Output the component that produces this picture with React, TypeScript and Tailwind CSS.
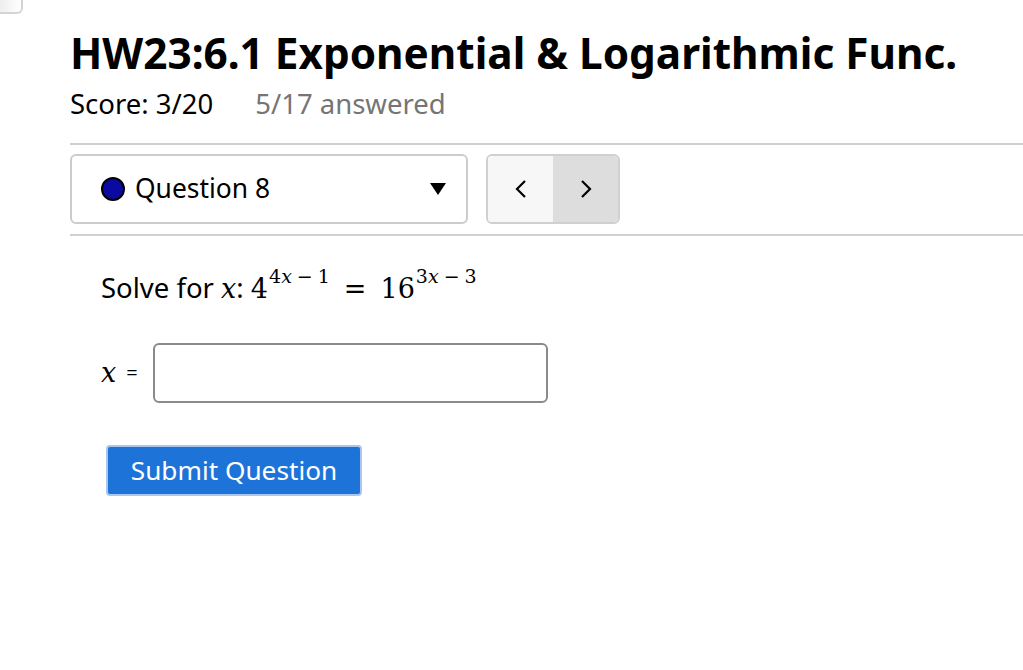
import React from 'react';

function Mx({ children }: { children: React.ReactNode }) {
  return <span className="italic">{children}</span>;
}

export default function App() {
  return (
    <div className="relative min-h-[670px] bg-white text-black font-['Noto_Sans',sans-serif]">
      {/* sidebar toggle stub */}
      <div className="absolute left-0 top-0 h-[14px] w-[23px] rounded-br-[6px] border-b-2 border-r-2 border-[#d4d4d4] bg-gradient-to-r from-[#eeeeee] to-white" />

      <div className="pl-[70px] pt-[26px]">
        <h1 className="text-[42.3px] font-bold leading-[54px]">
          HW23:6.1 Exponential &amp; Logarithmic Func.
        </h1>
        <div className="mt-[7px] flex items-baseline gap-[42px] text-[27.5px] leading-[34px]">
          <span>Score: 3/20</span>
          <span className="text-[#757575]">5/17 answered</span>
        </div>

        <div className="mt-[22px] border-t-2 border-[#d0d0d0]" />

        <div className="flex items-center gap-[18px] pb-[10px] pt-[9px]">
          <div className="flex h-[70px] w-[398px] items-center rounded-[6px] border-2 border-[#cccccc] pl-[29px] pr-[20px]">
            <span className="h-[24px] w-[24px] rounded-full border-2 border-black bg-[#0a0aa0]" />
            <span className="ml-[10px] text-[26.4px]">Question 8</span>
            <svg className="ml-auto" width="16" height="12" viewBox="0 0 16 12">
              <path d="M0 0 H16 L8 12 Z" fill="#000" />
            </svg>
          </div>
          <div className="flex h-[70px] w-[134px] overflow-hidden rounded-[6px] border-2 border-[#d0d0d0]">
            <button className="flex flex-1 items-center justify-center bg-[#f7f7f7]">
              <svg width="12" height="20" viewBox="0 0 12 20">
                <path d="M10 2 L2 10 L10 18" fill="none" stroke="#000" strokeWidth="2.2" />
              </svg>
            </button>
            <button className="flex flex-1 items-center justify-center bg-[#dddddd]">
              <svg width="12" height="20" viewBox="0 0 12 20">
                <path d="M2 2 L10 10 L2 18" fill="none" stroke="#000" strokeWidth="2.2" />
              </svg>
            </button>
          </div>
        </div>

        <div className="border-t-2 border-[#d0d0d0]" />

        <div className="pl-[31px]">
          <div className="mt-[32px] flex items-baseline text-[27.5px] leading-[40px]">
            <span>Solve for&nbsp;</span>
            <span className="font-['DejaVu_Serif',serif] text-[27px]">
              <Mx>x</Mx>
            </span>
            <span>:&nbsp;</span>
            <span className="font-['DejaVu_Serif',serif] text-[27px]">
              4
              <sup className="ml-[1px] text-[19px] top-[-0.8em]">
                4<Mx>x</Mx>
                <span className="mx-[5px]">−</span>1
              </sup>
              <span className="mx-[14px]">=</span>
              16
              <sup className="ml-[1px] text-[19px] top-[-0.8em]">
                3<Mx>x</Mx>
                <span className="mx-[5px]">−</span>3
              </sup>
            </span>
          </div>

          <div className="mt-[34px] flex items-center">
            <span className="font-['DejaVu_Serif',serif] text-[27px] italic">x</span>
            <span className="ml-[10px] text-[20px]">=</span>
            <input
              type="text"
              className="ml-[15px] h-[60px] w-[395px] rounded-[6px] border-2 border-[#8a8a8a] outline-none"
            />
          </div>

          <button className="ml-[5px] mt-[42px] h-[51px] w-[256px] rounded-[4px] border-2 border-[#a8c6ee] bg-[#1e73d8] text-[26.2px] text-white">
            Submit Question
          </button>
        </div>
      </div>
    </div>
  );
}
